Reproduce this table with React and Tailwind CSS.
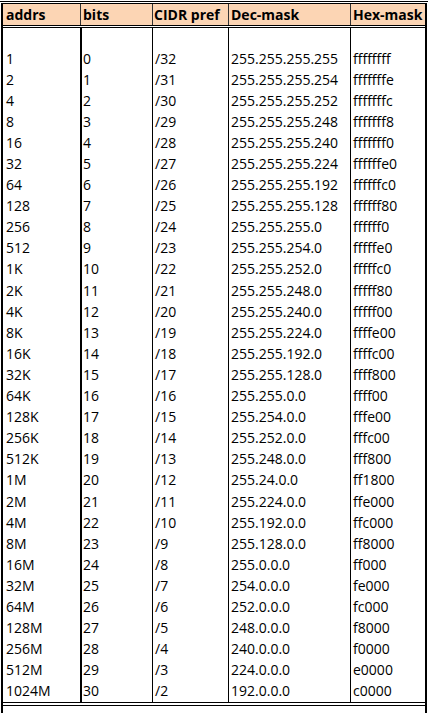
import React from 'react';

const rows = [
  ['1', '0', '/32', '255.255.255.255', 'ffffffff'],
  ['2', '1', '/31', '255.255.255.254', 'fffffffe'],
  ['4', '2', '/30', '255.255.255.252', 'fffffffc'],
  ['8', '3', '/29', '255.255.255.248', 'fffffff8'],
  ['16', '4', '/28', '255.255.255.240', 'fffffff0'],
  ['32', '5', '/27', '255.255.255.224', 'ffffffe0'],
  ['64', '6', '/26', '255.255.255.192', 'ffffffc0'],
  ['128', '7', '/25', '255.255.255.128', 'ffffff80'],
  ['256', '8', '/24', '255.255.255.0', 'ffffff0'],
  ['512', '9', '/23', '255.255.254.0', 'fffffe0'],
  ['1K', '10', '/22', '255.255.252.0', 'fffffc0'],
  ['2K', '11', '/21', '255.255.248.0', 'fffff80'],
  ['4K', '12', '/20', '255.255.240.0', 'fffff00'],
  ['8K', '13', '/19', '255.255.224.0', 'ffffe00'],
  ['16K', '14', '/18', '255.255.192.0', 'ffffc00'],
  ['32K', '15', '/17', '255.255.128.0', 'ffff800'],
  ['64K', '16', '/16', '255.255.0.0', 'ffff00'],
  ['128K', '17', '/15', '255.254.0.0', 'fffe00'],
  ['256K', '18', '/14', '255.252.0.0', 'fffc00'],
  ['512K', '19', '/13', '255.248.0.0', 'fff800'],
  ['1M', '20', '/12', '255.24.0.0', 'ff1800'],
  ['2M', '21', '/11', '255.224.0.0', 'ffe000'],
  ['4M', '22', '/10', '255.192.0.0', 'ffc000'],
  ['8M', '23', '/9', '255.128.0.0', 'ff8000'],
  ['16M', '24', '/8', '255.0.0.0', 'ff000'],
  ['32M', '25', '/7', '254.0.0.0', 'fe000'],
  ['64M', '26', '/6', '252.0.0.0', 'fc000'],
  ['128M', '27', '/5', '248.0.0.0', 'f8000'],
  ['256M', '28', '/4', '240.0.0.0', 'f0000'],
  ['512M', '29', '/3', '224.0.0.0', 'e0000'],
  ['1024M', '30', '/2', '192.0.0.0', 'c0000'],
];

const font = { fontFamily: '"Open Sans", Lato, sans-serif' };

function Row({ r, h }) {
  return (
    <div className={`flex ${h}`}>
      <div className="w-[79px] pl-[3px] border-r-2 border-black flex items-center">{r[0]}</div>
      <div className="w-[71px] pl-[1px] border-r border-black flex items-center">{r[1]}</div>
      <div className="w-[76px] pl-[2px] border-r border-black flex items-center">{r[2]}</div>
      <div className="w-[122px] pl-[2px] border-r border-black flex items-center">{r[3]}</div>
      <div className="w-[74px] pl-[2px] flex items-center">{r[4]}</div>
    </div>
  );
}

export default function App() {
  return (
    <div className="w-[428px] h-[713px] bg-white overflow-hidden text-black text-[14px] leading-none" style={font}>
      <div className="h-px bg-black mt-px"></div>
      <div className="h-[710px] ml-px w-[426px] mt-px border-l-2 border-r-2 border-black flex flex-col">
        <div className="border-t border-b border-black">
          <div className="flex h-[21px] bg-[#fcd5b4] font-bold">
            <div className="w-[78px] pl-[3px] border-r border-[#333] flex items-center">addrs</div>
            <div className="w-[72px] pl-[2px] border-r border-[#333] flex items-center">bits</div>
            <div className="w-[76px] pl-[1px] border-r border-[#333] flex items-center">CIDR pref</div>
            <div className="w-[122px] pl-[2px] border-r border-[#333] flex items-center">Dec-mask</div>
            <div className="w-[74px] pl-[2px] flex items-center">Hex-mask</div>
          </div>
        </div>
        <div className="mt-px border-t border-b border-black">
          <Row r={['', '', '', '', '']} h="h-[20px]" />
          {rows.map((r) => (
            <Row key={r[0]} r={r} h="h-[21.1px]" />
          ))}
        </div>
        <div className="mt-[2px] h-px bg-black"></div>
      </div>
    </div>
  );
}
